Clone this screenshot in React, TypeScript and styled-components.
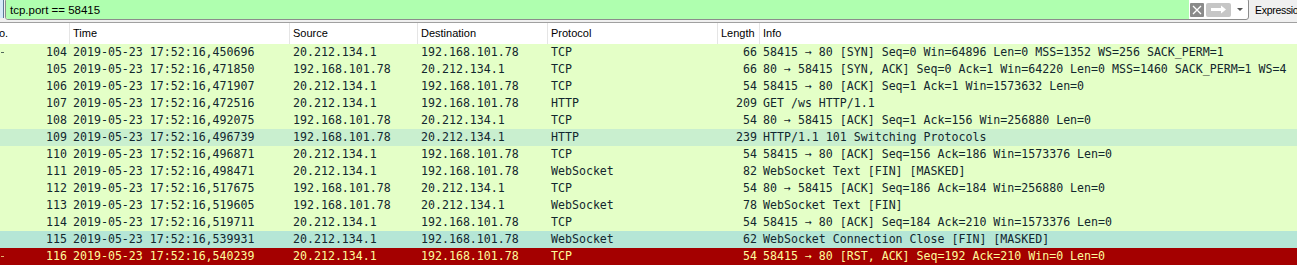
import React from 'react';
import styled, { createGlobalStyle } from 'styled-components';

const GlobalStyle = createGlobalStyle`
    body {
        margin: 0;
        background: #ffffff;
        overflow: hidden;
    }
`;

const Window = styled.div`
    width: 1297px;
    height: 269px;
    overflow: hidden;
    background: #ffffff;
    font-family: "Liberation Sans", Arial, sans-serif;
`;

const FilterBar = styled.div`
    height: 22px;
    background: #f0f0f0;
    display: flex;
    align-items: flex-start;
`;

const BookmarkEdge = styled.div`
    width: 3px;
    height: 20px;
    background: #d6eaf9;
    border-right: 1px solid #5a7a94;
    margin-top: -2px;
`;

const FilterField = styled.div`
    flex: 1;
    height: 20px;
    margin: -2px 0 0 1px;
    border: 1px solid #8c8c8c;
    border-radius: 3px;
    background: #ffffff;
    display: flex;
    align-items: center;
    overflow: hidden;
`;

const FilterInput = styled.div`
    flex: 1;
    align-self: stretch;
    background: #afffaf;
    padding-left: 4px;
    padding-top: 1px;
    display: flex;
    align-items: center;
    font-size: 11.5px;
    color: #000000;
`;

const ClearButton = styled.div`
    width: 14px;
    height: 14px;
    margin: 1px 2px 0 1px;
    background: #8a8a8a;
    border-radius: 1px;
    display: flex;
    align-items: center;
    justify-content: center;
`;

const ApplyButton = styled.div`
    width: 25px;
    height: 14px;
    margin-top: 1px;
    background: #c6c6c6;
    border-radius: 2px;
    display: flex;
    align-items: center;
    justify-content: center;
`;

const DropArea = styled.div`
    width: 17px;
    display: flex;
    justify-content: center;
    padding-top: 1px;
`;

const DropTriangle = styled.div`
    width: 0;
    height: 0;
    border-left: 3px solid transparent;
    border-right: 3px solid transparent;
    border-top: 3px solid #555555;
`;

const ExpressionLabel = styled.div`
    flex: 0 0 42px;
    min-width: 0;
    padding: 4px 0 0 6px;
    font-size: 10.5px;
    letter-spacing: -0.3px;
    color: #000000;
    white-space: nowrap;
`;

const Table = styled.div`
    margin-left: -12px;
`;

const columns = '82px 220px 128px 130px 170px 42px 1fr';

const HeaderRow = styled.div`
    display: grid;
    grid-template-columns: ${ columns };
    height: 21px;
    border-top: 1px solid #a0a0a0;
    background: #ffffff;
`;

const HeaderCell = styled.div`
    border-right: 1px solid #e5e5e5;
    padding-left: 3px;
    font-size: 11px;
    line-height: 21px;
    color: #000000;
    white-space: nowrap;
    &:last-child {
        border-right: none;
    }
`;

const PacketRow = styled.div<{ $bg: string; $fg: string }>`
    display: grid;
    grid-template-columns: ${ columns };
    height: 17px;
    line-height: 17px;
    background: ${ props => props.$bg };
    color: ${ props => props.$fg };
    font-family: "DejaVu Sans Mono", "Liberation Mono", monospace;
    font-size: 11.6px;
    white-space: nowrap;
`;

const Cell = styled.div<{ $right?: boolean }>`
    padding: 0 3px;
    overflow: hidden;
    text-align: ${ props => props.$right ? 'right' : 'left' };
`;

const NumberCell = styled.div`
    display: flex;
    align-items: center;
    justify-content: space-between;
    padding: 0 3px 0 13px;
`;

const RelatedMark = styled.span<{ $show: boolean }>`
    width: 3px;
    height: 1px;
    background: currentColor;
    opacity: ${ props => props.$show ? 0.7 : 0 };
`;

type Packet = {
    no: number;
    time: string;
    src: string;
    dst: string;
    proto: string;
    len: number;
    info: string;
    bg: string;
    fg: string;
    mark?: boolean;
};

const GREEN = '#e4ffc7';
const DARK = '#12272e';

const packets: Packet[] = [
    { no: 104, time: '450696', src: '20.212.134.1', dst: '192.168.101.78', proto: 'TCP', len: 66, info: '58415 → 80 [SYN] Seq=0 Win=64896 Len=0 MSS=1352 WS=256 SACK_PERM=1', bg: GREEN, fg: DARK, mark: true },
    { no: 105, time: '471850', src: '192.168.101.78', dst: '20.212.134.1', proto: 'TCP', len: 66, info: '80 → 58415 [SYN, ACK] Seq=0 Ack=1 Win=64220 Len=0 MSS=1460 SACK_PERM=1 WS=4', bg: GREEN, fg: DARK },
    { no: 106, time: '471907', src: '20.212.134.1', dst: '192.168.101.78', proto: 'TCP', len: 54, info: '58415 → 80 [ACK] Seq=1 Ack=1 Win=1573632 Len=0', bg: GREEN, fg: DARK },
    { no: 107, time: '472516', src: '20.212.134.1', dst: '192.168.101.78', proto: 'HTTP', len: 209, info: 'GET /ws HTTP/1.1', bg: GREEN, fg: DARK },
    { no: 108, time: '492075', src: '192.168.101.78', dst: '20.212.134.1', proto: 'TCP', len: 54, info: '80 → 58415 [ACK] Seq=1 Ack=156 Win=256880 Len=0', bg: GREEN, fg: DARK },
    { no: 109, time: '496739', src: '192.168.101.78', dst: '20.212.134.1', proto: 'HTTP', len: 239, info: 'HTTP/1.1 101 Switching Protocols', bg: '#c9efcf', fg: DARK },
    { no: 110, time: '496871', src: '20.212.134.1', dst: '192.168.101.78', proto: 'TCP', len: 54, info: '58415 → 80 [ACK] Seq=156 Ack=186 Win=1573376 Len=0', bg: GREEN, fg: DARK },
    { no: 111, time: '498471', src: '20.212.134.1', dst: '192.168.101.78', proto: 'WebSocket', len: 82, info: 'WebSocket Text [FIN] [MASKED]', bg: GREEN, fg: DARK },
    { no: 112, time: '517675', src: '192.168.101.78', dst: '20.212.134.1', proto: 'TCP', len: 54, info: '80 → 58415 [ACK] Seq=186 Ack=184 Win=256880 Len=0', bg: GREEN, fg: DARK },
    { no: 113, time: '519605', src: '192.168.101.78', dst: '20.212.134.1', proto: 'WebSocket', len: 78, info: 'WebSocket Text [FIN]', bg: GREEN, fg: DARK },
    { no: 114, time: '519711', src: '20.212.134.1', dst: '192.168.101.78', proto: 'TCP', len: 54, info: '58415 → 80 [ACK] Seq=184 Ack=210 Win=1573376 Len=0', bg: GREEN, fg: DARK },
    { no: 115, time: '539931', src: '20.212.134.1', dst: '192.168.101.78', proto: 'WebSocket', len: 62, info: 'WebSocket Connection Close [FIN] [MASKED]', bg: '#b5e6d6', fg: DARK },
    { no: 116, time: '540239', src: '20.212.134.1', dst: '192.168.101.78', proto: 'TCP', len: 54, info: '58415 → 80 [RST, ACK] Seq=192 Ack=210 Win=0 Len=0', bg: '#a40000', fg: '#fffc9c', mark: true },
];

const headers = [ 'No.', 'Time', 'Source', 'Destination', 'Protocol', 'Length', 'Info' ];

const App = () => {
    return (
        <Window>
            <GlobalStyle />
            <FilterBar>
                <BookmarkEdge />
                <FilterField>
                    <FilterInput>tcp.port == 58415</FilterInput>
                    <ClearButton>
                        <svg width="10" height="10" viewBox="0 0 10 10">
                            <path d="M1 1 L9 9 M9 1 L1 9" stroke="#ffffff" strokeWidth="1.3" />
                        </svg>
                    </ClearButton>
                    <ApplyButton>
                        <svg width="17" height="9" viewBox="0 0 17 9">
                            <path d="M1 3 H11 V0.5 L16 4.5 L11 8.5 V6 H1 Z" fill="#ffffff" />
                        </svg>
                    </ApplyButton>
                    <DropArea>
                        <DropTriangle />
                    </DropArea>
                </FilterField>
                <ExpressionLabel>Expression…</ExpressionLabel>
            </FilterBar>
            <Table>
                <HeaderRow>
                    { headers.map((h) => (
                        <HeaderCell key={ h }>{ h }</HeaderCell>
                    )) }
                </HeaderRow>
                { packets.map((p) => (
                    <PacketRow key={ p.no } $bg={ p.bg } $fg={ p.fg }>
                        <NumberCell>
                            <RelatedMark $show={ !!p.mark } />
                            <span>{ p.no }</span>
                        </NumberCell>
                        <Cell>{ `2019-05-23 17:52:16,${ p.time }` }</Cell>
                        <Cell>{ p.src }</Cell>
                        <Cell>{ p.dst }</Cell>
                        <Cell>{ p.proto }</Cell>
                        <Cell $right>{ p.len }</Cell>
                        <Cell>{ p.info }</Cell>
                    </PacketRow>
                )) }
            </Table>
        </Window>
    );
};

export default App;
